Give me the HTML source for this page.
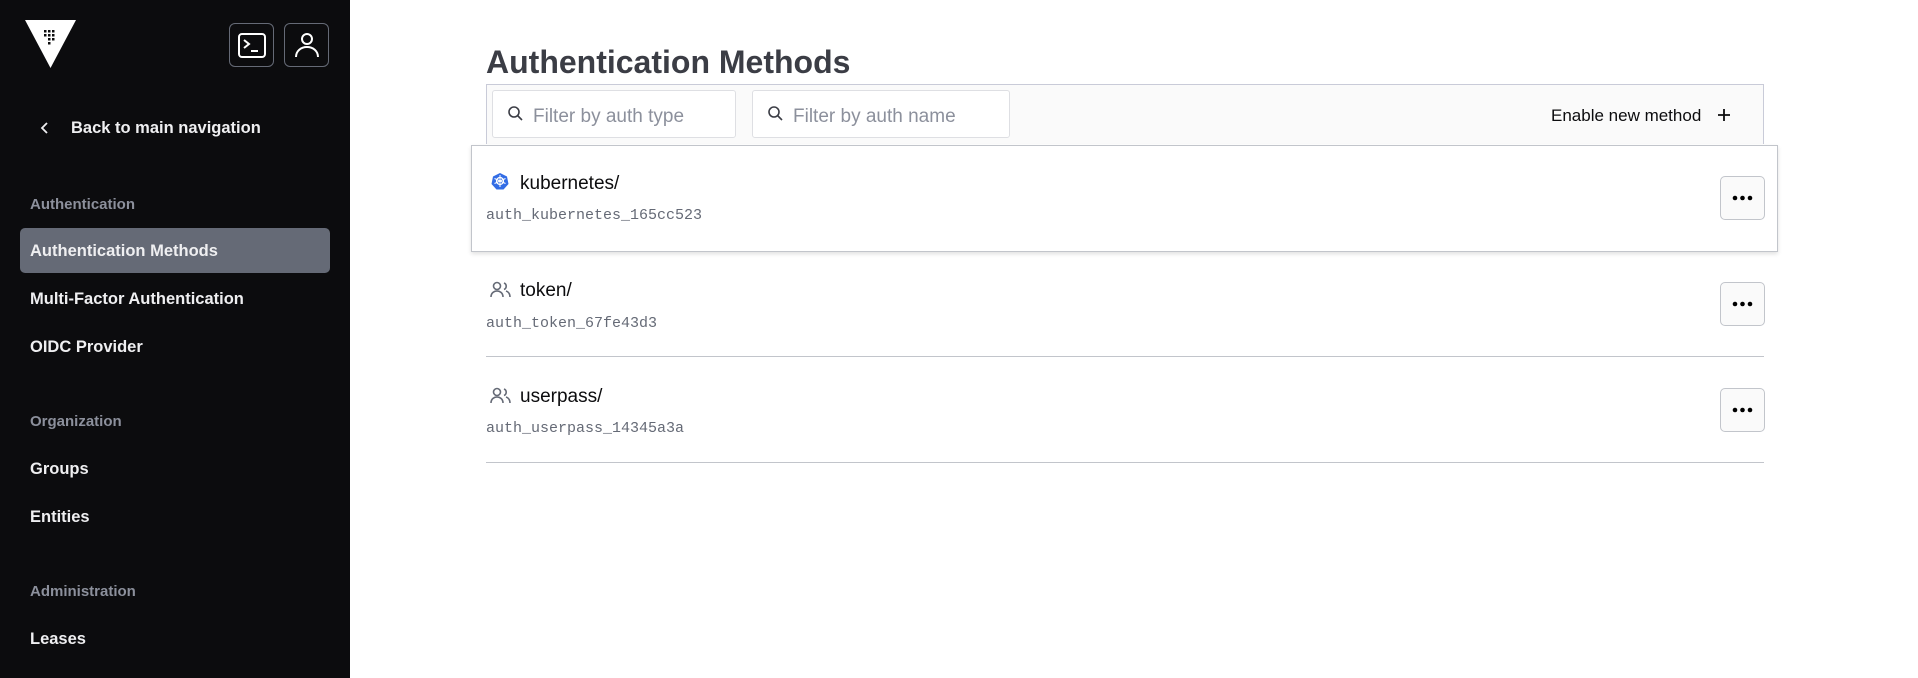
<!DOCTYPE html>
<html><head><style>
*{box-sizing:border-box;margin:0;padding:0}
body{width:1918px;height:678px;overflow:hidden;background:#fff;font-family:"Liberation Sans",sans-serif;position:relative;color:#0c0c0e}
.sb{position:absolute;left:0;top:0;width:350px;height:678px;background:#0c0c0e}
.t{position:absolute;font-size:16.5px;font-weight:bold;color:#efeff1;white-space:nowrap}
.h{position:absolute;font-size:15px;font-weight:bold;color:#8c909c}
.ib{position:absolute;top:23px;width:45px;height:44px;border:1px solid #656a76;border-radius:6px}
.in{position:absolute;top:90px;height:48px;background:#fff;border:1px solid #dedfe3;border-radius:3px;font-size:19px;color:#8c909c;padding:15px 0 0 40px}
.in svg{position:absolute;left:14px;top:14px}
.nm{position:absolute;left:520px;font-size:19px;color:#0c0c0e}
.id{position:absolute;left:486px;font-family:"Liberation Mono",monospace;font-size:15px;color:#656a76}
.dot{position:absolute;left:1720px;width:45px;height:44px;border:1px solid #c2c5cb;border-radius:5px;background:#fafafa}
.hr{position:absolute;left:486px;width:1278px;height:1px;background:#c2c5cb}
.pi{position:absolute;left:490px}
</style></head><body>
<div class="sb">
<svg style="position:absolute;left:25px;top:20px" width="51" height="48" viewBox="0 0 51 48"><path d="M0 0H51L25.5 48Z" fill="#fff"/><g fill="#0c0c0e"><rect x="19" y="10" width="2.5" height="2.5"/><rect x="23" y="10" width="2.5" height="2.5"/><rect x="27" y="10" width="2.5" height="2.5"/><rect x="19" y="14" width="2.5" height="2.5"/><rect x="23" y="14" width="2.5" height="2.5"/><rect x="27" y="14" width="2.5" height="2.5"/><rect x="23" y="18" width="2.5" height="2.5"/><rect x="27" y="18" width="2.5" height="2.5"/><rect x="23" y="22" width="2.5" height="2.5"/></g></svg>
<div class="ib" style="left:229px"><svg width="45" height="44" viewBox="0 0 45 44"><rect x="9" y="10" width="26" height="23" rx="3" fill="none" stroke="#fff" stroke-width="2"/><path d="M14 16l5 4-5 4M21 27h7" fill="none" stroke="#fff" stroke-width="2"/></svg></div>
<div class="ib" style="left:284px"><svg width="45" height="44" viewBox="0 0 45 44"><circle cx="22" cy="15" r="5" fill="none" stroke="#fff" stroke-width="2"/><path d="M11 33c0-6 5-10 11-10s11 4 11 10" fill="none" stroke="#fff" stroke-width="2"/></svg></div>
<svg style="position:absolute;left:40px;top:121px" width="10" height="14"><path d="M7 2L2 7l5 5" fill="none" stroke="#efeff1" stroke-width="1.8"/></svg>
<div class="t" style="left:71px;top:119px">Back to main navigation</div>
<div class="h" style="left:30px;top:196px">Authentication</div>
<div style="position:absolute;left:20px;top:228px;width:310px;height:45px;background:#656a76;border-radius:5px"></div>
<div class="t" style="left:30px;top:242px">Authentication Methods</div>
<div class="t" style="left:30px;top:290px">Multi-Factor Authentication</div>
<div class="t" style="left:30px;top:338px">OIDC Provider</div>
<div class="h" style="left:30px;top:413px">Organization</div>
<div class="t" style="left:30px;top:460px">Groups</div>
<div class="t" style="left:30px;top:508px">Entities</div>
<div class="h" style="left:30px;top:583px">Administration</div>
<div class="t" style="left:30px;top:630px">Leases</div>
</div>
<div style="position:absolute;left:486px;top:44px;font-size:32px;font-weight:bold;color:#3b3d45">Authentication Methods</div>
<div style="position:absolute;left:486px;top:84px;width:1278px;height:60px;background:#fafafa;border:1px solid #c9cbd8;border-bottom:none"></div>
<div class="in" style="left:492px;width:244px"><svg width="16" height="16"><circle cx="7" cy="7" r="5" fill="none" stroke="#3b3d45" stroke-width="1.6"/><path d="M11 11l4 4" stroke="#3b3d45" stroke-width="1.6"/></svg>Filter by auth type</div>
<div class="in" style="left:752px;width:258px"><svg width="16" height="16"><circle cx="7" cy="7" r="5" fill="none" stroke="#3b3d45" stroke-width="1.6"/><path d="M11 11l4 4" stroke="#3b3d45" stroke-width="1.6"/></svg>Filter by auth name</div>
<div style="position:absolute;left:1551px;top:106px;font-size:17px">Enable new method</div>
<svg style="position:absolute;left:1717px;top:108px" width="14" height="14"><path d="M7 1v12M1 7h12" stroke="#0c0c0e" stroke-width="1.8"/></svg>
<div style="position:absolute;left:471px;top:145px;width:1307px;height:107px;border:1px solid #c2c5cb;background:#fff;box-shadow:0 2px 4px rgba(0,0,0,.12)"></div>
<svg class="pi" style="left:491px;top:172px" width="18" height="18" viewBox="0 0 18 18"><path d="M9 1l7 3.5 1.5 7.5-5 5.5h-7l-5-5.5L2 4.5Z" fill="#326ce5"/><circle cx="9" cy="9" r="3.5" fill="none" stroke="#fff" stroke-width="1.2"/><path d="M9 3v12M3.5 6.5l11 5M3.5 11.5l11-5" stroke="#fff" stroke-width="1"/></svg>
<div class="nm" style="top:173px">kubernetes/</div>
<div class="id" style="top:207px">auth_kubernetes_165cc523</div>
<div class="dot" style="top:176px"><svg width="43" height="42"><circle cx="14" cy="21" r="2.3"/><circle cx="21.5" cy="21" r="2.3"/><circle cx="29" cy="21" r="2.3"/></svg></div>
<svg class="pi" style="top:281px" width="22" height="18" viewBox="0 0 22 18"><circle cx="7" cy="5" r="3.5" fill="none" stroke="#656a76" stroke-width="1.6"/><path d="M1 16c0-4 3-6 6-6s6 2 6 6M14 2a3.5 3.5 0 010 6.5M16 10c3 1 4 3 4 6" fill="none" stroke="#656a76" stroke-width="1.6"/></svg>
<div class="nm" style="top:280px">token/</div>
<div class="id" style="top:315px">auth_token_67fe43d3</div>
<div class="dot" style="top:282px"><svg width="43" height="42"><circle cx="14" cy="21" r="2.3"/><circle cx="21.5" cy="21" r="2.3"/><circle cx="29" cy="21" r="2.3"/></svg></div>
<div class="hr" style="top:356px"></div>
<svg class="pi" style="top:387px" width="22" height="18" viewBox="0 0 22 18"><circle cx="7" cy="5" r="3.5" fill="none" stroke="#656a76" stroke-width="1.6"/><path d="M1 16c0-4 3-6 6-6s6 2 6 6M14 2a3.5 3.5 0 010 6.5M16 10c3 1 4 3 4 6" fill="none" stroke="#656a76" stroke-width="1.6"/></svg>
<div class="nm" style="top:386px">userpass/</div>
<div class="id" style="top:420px">auth_userpass_14345a3a</div>
<div class="dot" style="top:388px"><svg width="43" height="42"><circle cx="14" cy="21" r="2.3"/><circle cx="21.5" cy="21" r="2.3"/><circle cx="29" cy="21" r="2.3"/></svg></div>
<div class="hr" style="top:462px"></div>
</body></html>
